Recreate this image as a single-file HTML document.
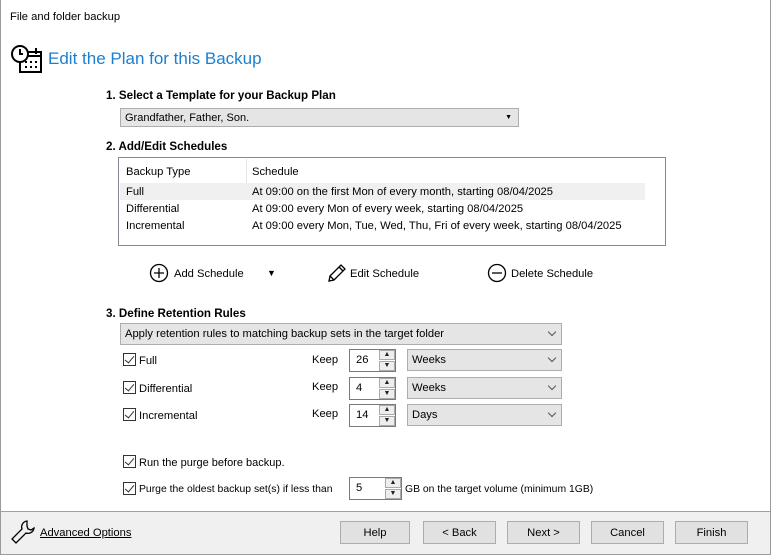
<!DOCTYPE html>
<html><head><meta charset="utf-8"><style>
*{box-sizing:border-box}
body{margin:0;width:771px;height:555px;background:#fff;font-family:"Liberation Sans",Tahoma,sans-serif;font-size:11.2px;color:#000;position:relative;overflow:hidden}
.a{position:absolute;white-space:nowrap;margin-top:1px}
.l{margin-top:2px}
.b{font-weight:bold;font-size:11.6px}
.combo{position:absolute;background:#e5e5e5;border:1px solid #adadad;padding:3px 4px;line-height:15px}
.chev{position:absolute;right:6px;top:5px;width:6px;height:6px;border-right:1px solid #555;border-bottom:1px solid #555;transform:rotate(45deg)}
.cb{position:absolute;width:13px;height:13px;border:1px solid #333;background:#fff}
.cb:after{content:"";position:absolute;left:3px;top:0px;width:4px;height:8px;border-right:1px solid #333;border-bottom:1px solid #333;transform:rotate(40deg)}
.spin{position:absolute;border:1px solid #7a7a7a;background:#fff;height:23px;padding:4px 0 0 6px}
.sb{position:absolute;right:0;width:16px;height:10px;background:#eee;border:1px solid #aaa;font-size:7px;line-height:8px;text-align:center;color:#222}
.btn{position:absolute;top:521px;height:23px;background:#e1e1e1;border:1px solid #adadad;text-align:center;line-height:22px}
</style></head><body>
<div style="position:absolute;left:0;top:0;width:771px;height:555px;border:1px solid #9a9a9a;border-top:none"></div>
<div class="a" style="left:10px;top:10px">File and folder backup</div>
<svg class="a" style="left:11px;top:43px" width="32" height="30" viewBox="0 0 32 30" fill="none" stroke="#000" stroke-width="2">
<rect x="9" y="8" width="21" height="20"/><line x1="9" y1="12" x2="30" y2="12"/><line x1="25" y1="4" x2="25" y2="10"/>
<circle cx="9" cy="10" r="8" fill="#fff"/><path d="M9 5v5h3"/>
<g fill="#000" stroke="none"><rect x="14" y="17" width="2" height="2"/><rect x="19" y="17" width="2" height="2"/><rect x="24" y="17" width="2" height="2"/><rect x="14" y="22" width="2" height="2"/><rect x="19" y="22" width="2" height="2"/><rect x="24" y="22" width="2" height="2"/></g></svg>
<div class="a" style="left:48px;top:48px;font-size:17px;color:#1a7fd0">Edit the Plan for this Backup</div>

<div class="a b" style="left:106px;top:88px">1. Select a Template for your Backup Plan</div>
<div class="combo" style="left:120px;top:108px;width:399px;height:19px;font-size:11px;padding-top:2px">Grandfather, Father, Son.<span style="position:absolute;right:6px;top:1px;font-size:7px">▼</span></div>

<div class="a b" style="left:106px;top:139px">2. Add/Edit Schedules</div>
<div style="position:absolute;left:118px;top:157px;width:548px;height:89px;border:1px solid #828790"></div>
<div style="position:absolute;left:246px;top:159px;width:1px;height:24px;background:#e5e5e5"></div>
<div style="position:absolute;left:120px;top:183px;width:525px;height:17px;background:#f0f0f0"></div>
<div class="a" style="left:126px;top:165px">Backup Type</div><div class="a" style="left:252px;top:165px">Schedule</div>
<div class="a" style="left:126px;top:185px">Full</div><div class="a" style="left:252px;top:185px">At 09:00 on the first Mon of every month, starting 08/04/2025</div>
<div class="a" style="left:126px;top:202px">Differential</div><div class="a" style="left:252px;top:202px">At 09:00 every Mon of every week, starting 08/04/2025</div>
<div class="a" style="left:126px;top:219px">Incremental</div><div class="a" style="left:252px;top:219px">At 09:00 every Mon, Tue, Wed, Thu, Fri of every week, starting 08/04/2025</div>

<svg class="a" style="left:149px;top:262px" width="20" height="20" fill="none" stroke="#000" stroke-width="1.3"><circle cx="10" cy="10" r="8.5"/><path d="M10 5v10M5 10h10"/></svg>
<div class="a l" style="left:174px;top:266px">Add Schedule</div>
<div class="a" style="left:267px;top:267px;font-size:9px">▼</div>
<svg class="a" style="left:326px;top:261px" width="22" height="22" fill="none" stroke="#000" stroke-width="1.3"><path d="M3 19l1-5L15 3l4 4L8 18z M13 5l4 4 M4 14l4 4"/></svg>
<div class="a l" style="left:350px;top:266px">Edit Schedule</div>
<svg class="a" style="left:487px;top:262px" width="20" height="20" fill="none" stroke="#000" stroke-width="1.3"><circle cx="10" cy="10" r="8.5"/><path d="M5 10h10"/></svg>
<div class="a l" style="left:511px;top:266px">Delete Schedule</div>

<div class="a b" style="left:106px;top:306px">3. Define Retention Rules</div>
<div class="combo" style="left:120px;top:323px;width:442px;height:22px">Apply retention rules to matching backup sets in the target folder<span class="chev"></span></div>

<div class="cb" style="left:123px;top:353px"></div><div class="a l" style="left:139px;top:353px">Full</div>
<div class="a l" style="left:312px;top:352px">Keep</div>
<div class="spin" style="left:349px;top:349px;width:47px">26<div class="sb" style="top:0">▲</div><div class="sb" style="top:11px">▼</div></div>
<div class="combo" style="left:407px;top:349px;width:155px;height:22px">Weeks<span class="chev"></span></div>

<div class="cb" style="left:123px;top:381px"></div><div class="a l" style="left:139px;top:381px">Differential</div>
<div class="a l" style="left:312px;top:379px">Keep</div>
<div class="spin" style="left:349px;top:377px;width:47px">4<div class="sb" style="top:0">▲</div><div class="sb" style="top:11px">▼</div></div>
<div class="combo" style="left:407px;top:377px;width:155px;height:22px">Weeks<span class="chev"></span></div>

<div class="cb" style="left:123px;top:408px"></div><div class="a l" style="left:139px;top:408px">Incremental</div>
<div class="a l" style="left:312px;top:406px">Keep</div>
<div class="spin" style="left:349px;top:404px;width:47px">14<div class="sb" style="top:0">▲</div><div class="sb" style="top:11px">▼</div></div>
<div class="combo" style="left:407px;top:404px;width:155px;height:22px">Days<span class="chev"></span></div>

<div class="cb" style="left:123px;top:455px"></div><div class="a l" style="left:139px;top:455px;font-size:11px">Run the purge before backup.</div>
<div class="cb" style="left:123px;top:482px"></div><div class="a l" style="left:139px;top:482px;font-size:10.4px">Purge the oldest backup set(s) if less than</div>
<div class="spin" style="left:349px;top:477px;width:53px">5<div class="sb" style="top:0">▲</div><div class="sb" style="top:11px">▼</div></div>
<div class="a l" style="left:405px;top:482px;font-size:10.4px">GB on the target volume (minimum 1GB)</div>

<div style="position:absolute;left:1px;top:511px;width:769px;height:43px;background:#f0f0f0;border-top:1px solid #a0a0a0"></div>
<svg class="a" style="left:10px;top:518px" width="26" height="26" fill="none" stroke="#000" stroke-width="1.3"><path d="M17 2a6 6 0 0 0-5 8L2 20l4 4 10-10a6 6 0 0 0 8-5l-3 2-3-1-1-3z"/></svg>
<div class="a l" style="left:40px;top:525px;text-decoration:underline">Advanced Options</div>
<div class="btn" style="left:340px;width:70px">Help</div>
<div class="btn" style="left:423px;width:73px">&lt; Back</div>
<div class="btn" style="left:507px;width:73px">Next &gt;</div>
<div class="btn" style="left:591px;width:73px">Cancel</div>
<div class="btn" style="left:675px;width:73px">Finish</div>
</body></html>
